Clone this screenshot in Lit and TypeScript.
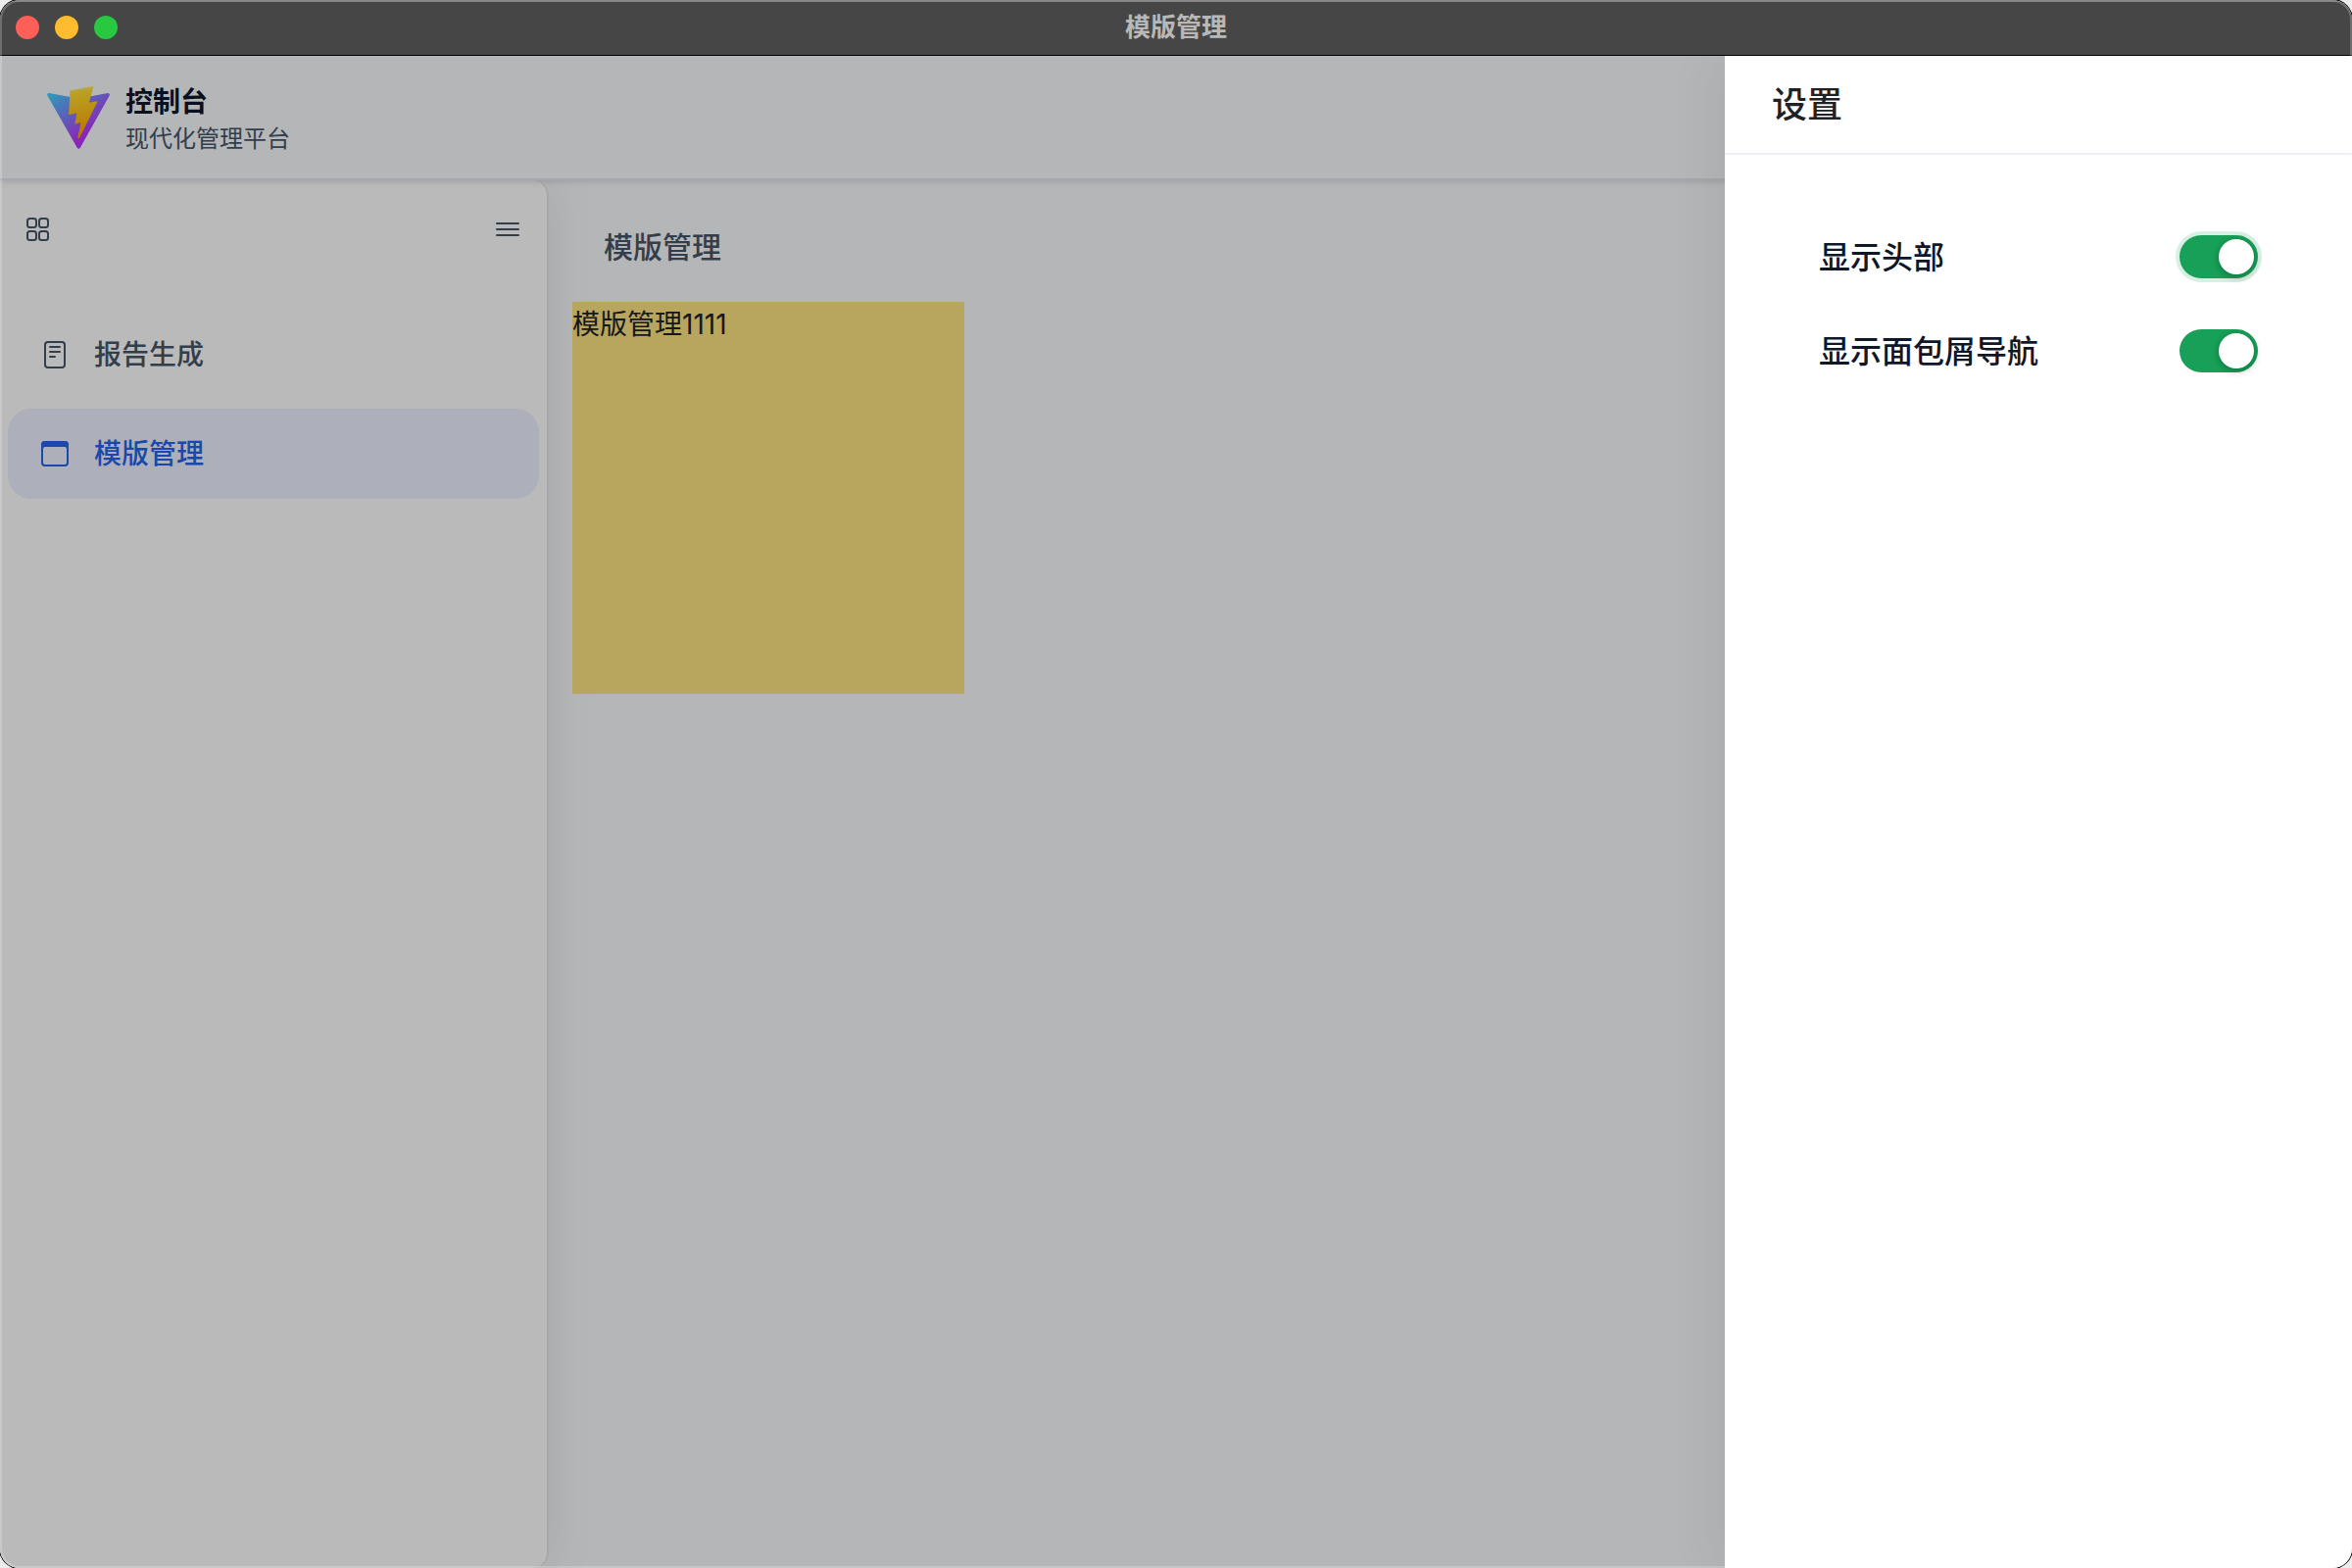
import { LitElement, html, css, svg } from "lit";
import { customElement, state } from "lit/decorators.js";

const logo = svg`
  <defs>
    <linearGradient id="tri" x1="-0.828%" x2="57.636%" y1="7.652%" y2="78.411%">
      <stop offset="0%" stop-color="#41D1FF"></stop>
      <stop offset="100%" stop-color="#BD34FE"></stop>
    </linearGradient>
    <linearGradient id="bolt" x1="43.376%" x2="50.316%" y1="2.242%" y2="89.03%">
      <stop offset="0%" stop-color="#FFEA83"></stop>
      <stop offset="8.333%" stop-color="#FFDD35"></stop>
      <stop offset="100%" stop-color="#FFA800"></stop>
    </linearGradient>
  </defs>
  <path fill="url(#tri)" d="M255.153 37.938L134.897 252.976c-2.483 4.44-8.862 4.466-11.382.048L.875 37.958c-2.746-4.814 1.371-10.646 6.827-9.67l120.385 21.517a6.537 6.537 0 0 0 2.322-.004l117.867-21.483c5.438-.991 9.574 4.796 6.877 9.62Z"></path>
  <path fill="url(#bolt)" d="M185.432.063L96.44 17.501a3.268 3.268 0 0 0-2.634 3.014l-5.474 92.456a3.268 3.268 0 0 0 3.997 3.378l24.777-5.718c2.318-.535 4.413 1.507 3.936 3.838l-7.361 36.047c-.495 2.426 1.782 4.5 4.151 3.78l15.304-4.649c2.372-.72 4.652 1.36 4.15 3.788l-11.698 56.621c-.732 3.542 3.979 5.473 5.943 2.437l1.313-2.028l72.516-144.72c1.215-2.423-.88-5.186-3.54-4.672l-25.505 4.922c-2.396.462-4.435-1.77-3.759-4.114l16.646-57.705c.677-2.35-1.37-4.583-3.769-4.113Z"></path>
`;

@customElement("app-root")
export class AppRoot extends LitElement {
  @state() private showHeader = true;
  @state() private showCrumbs = true;

  static styles = css`
    :host {
      display: block;
      font-family: Inter, "Noto Sans CJK SC", sans-serif;
      color: #1f2225;
      background: #ececec;
    }
    * {
      box-sizing: border-box;
    }
    .window {
      position: relative;
      display: flex;
      flex-direction: column;
      min-height: 100vh;
      border-radius: 20px;
      overflow: hidden;
      background: #f8fafc;
      box-shadow: 0 0 0 1px #000;
    }
    .frame {
      position: absolute;
      inset: 0;
      border-radius: 20px;
      box-shadow: inset 0 0 0 2px rgba(255, 255, 255, 0.22);
      pointer-events: none;
    }
    .titlebar {
      display: grid;
      grid-template-columns: 1fr auto 1fr;
      align-items: center;
      height: 57px;
      padding: 0 16px;
      background: #464646;
      border-bottom: 1px solid #000;
      box-shadow: inset 0 2px 0 rgba(255, 255, 255, 0.18);
    }
    .lights {
      display: flex;
      gap: 16px;
    }
    .light {
      width: 24px;
      height: 24px;
      padding: 0;
      border: 0;
      border-radius: 50%;
    }
    .close { background: #ff5f57; }
    .minimize { background: #febc2e; }
    .zoom { background: #28c840; }
    .window-title {
      margin: 0;
      font-size: 26px;
      line-height: 32px;
      font-weight: 700;
      color: #b8b8b8;
    }
    .stage {
      position: relative;
      flex: 1;
      display: flex;
      flex-direction: column;
      overflow: hidden;
    }
    .header {
      position: relative;
      display: flex;
      align-items: center;
      gap: 16px;
      height: 127px;
      padding: 0 48px;
      background: #f8fafc;
      border-bottom: 2px solid #e2e8f0;
      box-shadow: 0 2px 6px rgba(0, 0, 0, 0.12);
    }
    .logo {
      width: 64px;
      height: 64px;
    }
    .brand {
      padding-top: 4px;
    }
    .brand-name {
      margin: 0;
      font-size: 28px;
      line-height: 40px;
      font-weight: 600;
      color: #0f172a;
    }
    .brand-sub {
      margin: 0;
      font-size: 24px;
      line-height: 36px;
      color: #475569;
    }
    .body {
      flex: 1;
      display: flex;
    }
    .sidebar {
      width: 560px;
      flex: none;
      background: #fff;
      border-right: 2px solid #e5e7eb;
      border-radius: 0 16px 16px 0;
      box-shadow: 4px 0 48px rgba(0, 0, 0, 0.08);
    }
    .tools {
      display: flex;
      justify-content: space-between;
      align-items: center;
      height: 100px;
      padding: 0 26px;
    }
    .tool {
      display: flex;
      padding: 0;
      border: 0;
      background: none;
      color: #475569;
    }
    .icon {
      width: 28px;
      height: 28px;
      fill: none;
      stroke: currentColor;
      stroke-width: 2;
      stroke-linecap: round;
      stroke-linejoin: round;
    }
    .menu {
      display: flex;
      flex-direction: column;
      gap: 9px;
      padding: 32px 8px;
    }
    .item {
      display: flex;
      align-items: center;
      gap: 26px;
      height: 92px;
      padding: 0 34px;
      border-radius: 24px;
      font-size: 28px;
      line-height: 40px;
      font-weight: 500;
      color: #475569;
      text-decoration: none;
    }
    .item.active {
      background: #eef2ff;
      color: #2563eb;
    }
    .main {
      flex: 1;
      padding: 0 24px;
    }
    .crumbs {
      display: flex;
      align-items: center;
      height: 124px;
      padding: 12px 32px 0;
      font-size: 30px;
      line-height: 44px;
      font-weight: 500;
      color: #475569;
    }
    .card {
      width: 400px;
      height: 400px;
      background: #fce483;
      font-size: 28px;
      line-height: 46px;
    }
    .mask {
      position: absolute;
      inset: 0;
      background: rgba(0, 0, 0, 0.27);
    }
    .drawer {
      position: absolute;
      inset: 0 0 0 auto;
      width: 640px;
      background: #fff;
      box-shadow: -12px 0 48px rgba(0, 0, 0, 0.06);
    }
    .drawer-title {
      margin: 0;
      padding: 25px 48px 24px;
      border-bottom: 2px solid #efeff5;
      font-size: 36px;
      line-height: 50px;
      font-weight: 500;
    }
    .settings {
      display: flex;
      flex-direction: column;
      gap: 48px;
      padding: 80px 96px;
    }
    .setting {
      display: flex;
      align-items: center;
      justify-content: space-between;
      height: 48px;
      font-size: 32px;
      line-height: 48px;
      font-weight: 500;
      color: #0f172a;
    }
    .setting label {
      padding-top: 2px;
    }
    .switch {
      appearance: none;
      display: flex;
      align-items: center;
      width: 80px;
      height: 44px;
      margin: 0;
      padding: 4px;
      border-radius: 22px;
      background: #dbdbdb;
      outline: none;
    }
    .switch::before {
      content: "";
      width: 36px;
      height: 36px;
      border-radius: 50%;
      background: #fff;
      box-shadow: 0 2px 8px rgba(0, 0, 0, 0.3);
    }
    .switch:checked {
      justify-content: flex-end;
      background: #18a058;
    }
    .switch.focused {
      box-shadow: 0 0 0 4px rgba(24, 160, 88, 0.17);
    }
  `;

  render() {
    return html`
      <div class="window">
        <div class="titlebar">
          <div class="lights">
            <button class="light close" aria-label="关闭"></button>
            <button class="light minimize" aria-label="最小化"></button>
            <button class="light zoom" aria-label="缩放"></button>
          </div>
          <h1 class="window-title">模版管理</h1>
        </div>
        <div class="stage">
          ${this.showHeader
            ? html`<header class="header">
                <svg class="logo" viewBox="0 0 256 257" aria-hidden="true">${logo}</svg>
                <div class="brand">
                  <p class="brand-name">控制台</p>
                  <p class="brand-sub">现代化管理平台</p>
                </div>
              </header>`
            : null}
          <div class="body">
            <aside class="sidebar">
              <div class="tools">
                <button class="tool" aria-label="应用">
                  <svg class="icon" viewBox="0 0 28 28">
                    <rect x="2" y="3" width="9" height="9" rx="2.5"></rect>
                    <rect x="14" y="3" width="9" height="9" rx="2.5"></rect>
                    <rect x="2" y="16" width="9" height="9" rx="2.5"></rect>
                    <rect x="14" y="16" width="9" height="9" rx="2.5"></rect>
                  </svg>
                </button>
                <button class="tool" aria-label="折叠菜单">
                  <svg class="icon" viewBox="0 0 28 28">
                    <path d="M3 8h22M3 14h22M3 20h22"></path>
                  </svg>
                </button>
              </div>
              <nav class="menu">
                <a class="item" href="#report">
                  <svg class="icon" viewBox="0 0 28 28">
                    <rect x="4" y="1" width="20" height="26" rx="3"></rect>
                    <path d="M9 6h10M9 11h10M9 16h5"></path>
                  </svg>
                  <span>报告生成</span>
                </a>
                <a class="item active" href="#template" aria-current="page">
                  <svg class="icon" viewBox="0 0 28 28">
                    <rect x="1" y="2" width="26" height="24" rx="3"></rect>
                    <path fill="currentColor" stroke="none" d="M0 9V5a4 4 0 0 1 4-4h20a4 4 0 0 1 4 4v4h-2a2 2 0 0 0-2-2H4a2 2 0 0 0-2 2z"></path>
                  </svg>
                  <span>模版管理</span>
                </a>
              </nav>
            </aside>
            <main class="main">
              ${this.showCrumbs ? html`<nav class="crumbs" aria-label="面包屑">模版管理</nav>` : null}
              <div class="card">模版管理1111</div>
            </main>
          </div>
          <div class="mask"></div>
          <section class="drawer" aria-labelledby="drawer-title">
            <h2 class="drawer-title" id="drawer-title">设置</h2>
            <div class="settings">
              <div class="setting">
                <label for="show-header">显示头部</label>
                <input
                  class="switch focused"
                  id="show-header"
                  type="checkbox"
                  role="switch"
                  .checked=${this.showHeader}
                  @change=${(e: Event) => (this.showHeader = (e.target as HTMLInputElement).checked)}
                />
              </div>
              <div class="setting">
                <label for="show-crumbs">显示面包屑导航</label>
                <input
                  class="switch"
                  id="show-crumbs"
                  type="checkbox"
                  role="switch"
                  .checked=${this.showCrumbs}
                  @change=${(e: Event) => (this.showCrumbs = (e.target as HTMLInputElement).checked)}
                />
              </div>
            </div>
          </section>
        </div>
        <div class="frame"></div>
      </div>
    `;
  }
}
